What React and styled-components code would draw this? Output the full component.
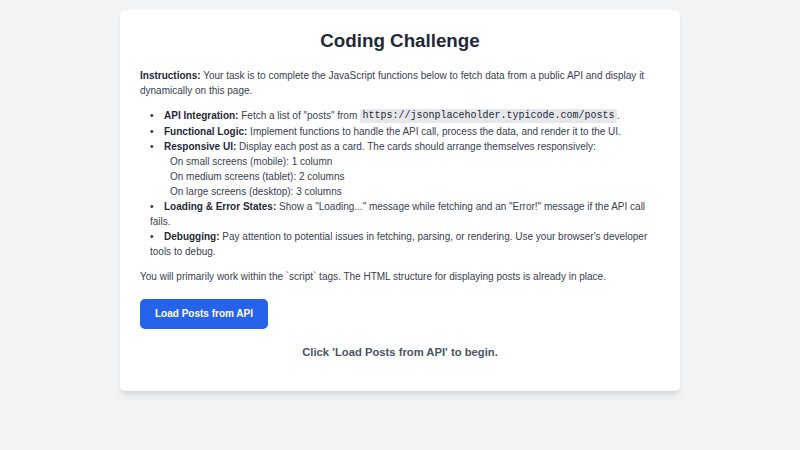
import React from "react";
import styled, { createGlobalStyle } from "styled-components";

const Global = createGlobalStyle`
  html, body { margin: 0; padding: 0; background: #f3f4f6; }
  body {
    font-family: "Liberation Sans", Arial, Helvetica, sans-serif;
    font-size: 10px;
    line-height: 15px;
    color: #374151;
  }
`;

const Page = styled.div`
  padding: 10px 0;
  display: flex;
  justify-content: center;
`;

const Card = styled.div`
  width: 560px;
  box-sizing: border-box;
  background: #ffffff;
  border-radius: 5px;
  padding: 20px 20px 30px;
  box-shadow: 0 6px 9px -2px rgba(0, 0, 0, 0.1), 0 2.5px 4px -2.5px rgba(0, 0, 0, 0.1);
`;

const Title = styled.h1`
  margin: 0 0 15px;
  text-align: center;
  font-size: 18.75px;
  line-height: 22.5px;
  font-weight: 700;
  color: #1f2937;
`;

const Para = styled.p`
  margin: 0 0 ${(p) => p.$mb || 10}px;
`;

const Label = styled.strong`
  font-weight: 700;
  color: #1f2937;
`;

const List = styled.ul`
  list-style: none;
  margin: 0 0 10px;
  padding: 0 0 0 10px;
`;

const Item = styled.li`
  &::before {
    content: "•";
    display: inline-block;
    width: 14px;
    color: #1f2937;
  }
`;

const SubList = styled.ul`
  list-style: none;
  margin: 0;
  padding: 0 0 0 20px;
`;

const Code = styled.code`
  font-family: "Liberation Mono", "Courier New", monospace;
  font-size: 10px;
  background: #e5e7eb;
  border-radius: 2.5px;
  padding: 1.25px 2.5px;
  color: #1f2937;
`;

const Button = styled.button`
  display: block;
  border: none;
  background: #2563eb;
  color: #ffffff;
  font-family: "Liberation Sans", Arial, sans-serif;
  font-size: 10px;
  line-height: 15px;
  font-weight: 700;
  padding: 7.5px 15px;
  border-radius: 5px;
  cursor: pointer;
`;

const Message = styled.p`
  margin: 15px 0 0;
  text-align: center;
  font-size: 11.25px;
  line-height: 17.5px;
  font-weight: 700;
  color: #4b5563;
`;

export default function App() {
  return (
    <>
      <Global />
      <Page>
        <Card>
          <Title>Coding Challenge</Title>
          <Para>
            <Label>Instructions:</Label> Your task is to complete the JavaScript functions below to fetch data from a public API and display it dynamically on this page.
          </Para>
          <List>
            <Item>
              <Label>API Integration:</Label> Fetch a list of "posts" from{" "}
              <Code>https://jsonplaceholder.typicode.com/posts</Code>.
            </Item>
            <Item>
              <Label>Functional Logic:</Label> Implement functions to handle the API call, process the data, and render it to the UI.
            </Item>
            <Item>
              <Label>Responsive UI:</Label> Display each post as a card. The cards should arrange themselves responsively:
              <SubList>
                <li>On small screens (mobile): 1 column</li>
                <li>On medium screens (tablet): 2 columns</li>
                <li>On large screens (desktop): 3 columns</li>
              </SubList>
            </Item>
            <Item>
              <Label>Loading &amp; Error States:</Label> Show a "Loading..." message while fetching and an "Error!" message if the API call fails.
            </Item>
            <Item>
              <Label>Debugging:</Label> Pay attention to potential issues in fetching, parsing, or rendering. Use your browser's developer tools to debug.
            </Item>
          </List>
          <Para $mb={15}>
            You will primarily work within the `script` tags. The HTML structure for displaying posts is already in place.
          </Para>
          <Button>Load Posts from API</Button>
          <Message>Click 'Load Posts from API' to begin.</Message>
        </Card>
      </Page>
    </>
  );
}
